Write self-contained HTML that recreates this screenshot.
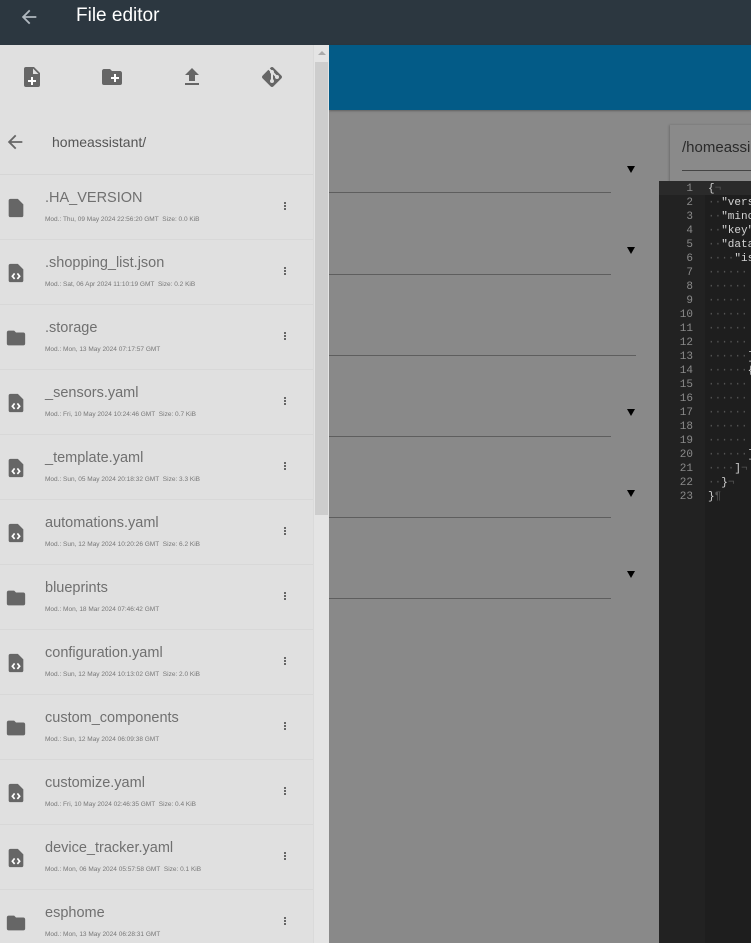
<!DOCTYPE html>
<html><head><meta charset="utf-8"><style>
*{margin:0;padding:0;box-sizing:border-box}
html,body{width:751px;height:943px;overflow:hidden}
body{background:#898989;font-family:"Liberation Sans",sans-serif;position:relative}
#wrap{position:absolute;left:0;top:0;width:751px;height:943px;overflow:hidden}
.top{position:absolute;left:0;top:0;width:751px;height:45px;background:#2c3740}
.top .t{position:absolute;left:76px;top:5px;color:#fff;font-size:19px}
.blue{position:absolute;left:329px;top:45px;right:0;height:65px;background:#035b87;box-shadow:0 1px 2px rgba(0,0,0,.3)}
.line{position:absolute;left:329px;height:1px;background:#5e5e5e}
.arr{position:absolute;left:627px;width:0;height:0;border-left:4px solid transparent;border-right:4px solid transparent;border-top:7px solid #000}
.card{position:absolute;left:670px;top:125px;width:90px;height:60px;background:#8a8a8a;box-shadow:-1px 0 2px rgba(0,0,0,.2)}
.card .p{position:absolute;left:12px;top:14px;font-size:15px;color:#2a2a2a}
.card .u{position:absolute;left:12px;top:45px;width:80px;height:1px;background:#444}
.ed{position:absolute;left:659px;top:181px;right:0;bottom:0;background:#1e1e1e}
.gut{position:absolute;left:0;top:0;width:46px;bottom:0;background:#222}
.ln{position:absolute;left:0;width:34px;text-align:right;font-family:"Liberation Mono",monospace;font-size:11px;color:#8a8a8a}
.code{position:absolute;left:49px;font-family:"Liberation Mono",monospace;font-size:11px;color:#d4d4d4;white-space:pre}
.curl{position:absolute;left:0;top:0;right:0;height:14px;background:#2a2a2a}
.drawer{position:absolute;left:0;top:45px;width:329px;height:898px;background:#e0e0e0;overflow:hidden}
.sb{position:absolute;left:313px;top:0;width:16px;height:898px;background:#e4e4e4;border-left:1px solid #dadada}
.thumb{position:absolute;left:1px;top:17px;width:13px;height:453px;background:#cdcdcd}
.item{position:absolute;left:0;width:313px;height:65px;border-bottom:1px solid #d8d8d8}
.item .n{position:absolute;left:45px;top:15px;font-size:14.5px;color:#707070}
.item .m{position:absolute;left:45px;top:41px;font-size:6.5px;color:#777}
.item svg.ic{position:absolute;left:5px;top:22px}
.dots{position:absolute;left:284px;top:27px;width:2px}
.dots i{display:block;width:2px;height:2px;background:#666;margin-bottom:1px}
</style></head><body><div id="wrap">
<div class="top">
<svg style="position:absolute;left:18px;top:6px" width="22" height="22" viewBox="0 0 24 24"><path d="M20,11V13H8L13.5,18.5L12.08,19.92L4.16,12L12.08,4.08L13.5,5.5L8,11H20Z" fill="#b0b8bf"/></svg>
<div class="t">File editor</div></div>
<div class="blue"></div>
<div class="line" style="top:192px;width:282px"></div>
<div class="line" style="top:274px;width:282px"></div>
<div class="line" style="top:355px;width:307px"></div>
<div class="line" style="top:436px;width:282px"></div>
<div class="line" style="top:517px;width:282px"></div>
<div class="line" style="top:598px;width:282px"></div>
<div class="arr" style="top:166px"></div><div class="arr" style="top:247px"></div><div class="arr" style="top:409px"></div><div class="arr" style="top:490px"></div><div class="arr" style="top:571px"></div>
<div class="card"><div class="p">/homeassi</div><div class="u"></div></div>
<div class="ed"><div class="gut"></div><div class="curl"></div>
<div class="ln" style="top:1px;line-height:14px">1<br>2<br>3<br>4<br>5<br>6<br>7<br>8<br>9<br>10<br>11<br>12<br>13<br>14<br>15<br>16<br>17<br>18<br>19<br>20<br>21<br>22<br>23</div>
<div class="code" style="top:1px;line-height:14px">{<span style="color:#555">¬</span>
<span style="color:#555">··</span>"vers
<span style="color:#555">··</span>"minc
<span style="color:#555">··</span>"key"
<span style="color:#555">··</span>"data
<span style="color:#555">····</span>"is
<span style="color:#555">······</span>
<span style="color:#555">······</span>
<span style="color:#555">······</span>
<span style="color:#555">······</span>
<span style="color:#555">······</span>
<span style="color:#555">······</span>
<span style="color:#555">······</span>]
<span style="color:#555">······</span>{
<span style="color:#555">······</span>
<span style="color:#555">······</span>
<span style="color:#555">······</span>
<span style="color:#555">······</span>
<span style="color:#555">······</span>
<span style="color:#555">······</span>]
<span style="color:#555">····</span>]<span style="color:#555">¬</span>
<span style="color:#555">··</span>}<span style="color:#555">¬</span>
}<span style="color:#555">¶</span></div></div>
<div class="drawer">
<svg style="position:absolute;left:20px;top:20px" width="24" height="24" viewBox="0 0 24 24"><path d="M14,2H6A2,2 0 0,0 4,4V20A2,2 0 0,0 6,22H18A2,2 0 0,0 20,20V8L14,2M13,9V3.5L18.5,9H13Z" fill="#666"/><path d="M11 12h2v3h3v2h-3v3h-2v-3h-3v-2h3z" fill="#fff"/></svg>
<svg style="position:absolute;left:100px;top:20px" width="24" height="24" viewBox="0 0 24 24"><path d="M10,4H4C2.89,4 2,4.89 2,6V18A2,2 0 0,0 4,20H20A2,2 0 0,0 22,18V8C22,6.89 21.1,6 20,6H12L10,4Z" fill="#666"/><path d="M14 9h2v3h3v2h-3v3h-2v-3h-3v-2h3z" fill="#fff"/></svg>
<svg style="position:absolute;left:180px;top:20px" width="24" height="24" viewBox="0 0 24 24"><path d="M9,16V10H5L12,3L19,10H15V16H9M5,20V18H19V20H5Z" fill="#666"/></svg>
<svg style="position:absolute;left:260px;top:20px" width="24" height="24" viewBox="0 0 24 24"><path d="M2.6,10.59L8.38,4.8L10.07,6.5C9.83,7.350 10.22,8.28 11,8.73V14.27C10.4,14.61 10,15.26 10,16A2,2 0 0,0 12,18A2,2 0 0,0 14,16C14,15.26 13.6,14.61 13,14.27V9.41L15.07,11.5C15,11.65 15,11.82 15,12A2,2 0 0,0 17,14A2,2 0 0,0 19,12A2,2 0 0,0 17,10C16.82,10 16.65,10 16.5,10.07L13.93,7.5C14.19,6.57 13.710,5.55 12.78,5.16C12.35,5 11.9,4.96 11.5,5.07L9.8,3.38L10.59,2.6C11.37,1.81 12.63,1.81 13.41,2.6L21.4,10.59C22.19,11.37 22.19,12.63 21.4,13.41L13.41,21.4C12.63,22.19 11.37,22.19 10.59,21.4L2.6,13.41C1.81,12.63 1.81,11.37 2.6,10.59Z" fill="#666"/></svg>
<svg style="position:absolute;left:4px;top:86px" width="22" height="22" viewBox="0 0 24 24"><path d="M20,11V13H8L13.5,18.5L12.08,19.92L4.16,12L12.08,4.08L13.5,5.5L8,11H20Z" fill="#666"/></svg>
<div style="position:absolute;left:52px;top:89px;font-size:14px;color:#555">homeassistant/</div>
<div style="position:absolute;left:0;top:129px;width:313px;height:1px;background:#d6d6d6"></div>
<div class="sb"><div class="thumb"></div><div style="position:absolute;left:4px;top:6px;border-left:4px solid transparent;border-right:4px solid transparent;border-bottom:4px solid #aaa"></div></div>
<div id="list" style="position:absolute;left:0;top:-45px;width:313px;height:943px;overflow:hidden"></div>
</div>
<script>
var F='<svg class="ic" width="22" height="22" viewBox="0 0 24 24"><path d="M14,2H6A2,2 0 0,0 4,4V20A2,2 0 0,0 6,22H18A2,2 0 0,0 20,20V8L14,2Z" fill="#666"/></svg>';
var C='<svg class="ic" width="22" height="22" viewBox="0 0 24 24"><path d="M14,2H6A2,2 0 0,0 4,4V20A2,2 0 0,0 6,22H18A2,2 0 0,0 20,20V8L14,2Z" fill="#666"/><path d="M10.5 12.5L8 15.5L10.5 18.5M13.5 12.5L16 15.5L13.5 18.5" stroke="#fff" stroke-width="1.8" fill="none"/></svg>';
var D='<svg class="ic" width="22" height="22" viewBox="0 0 24 24"><path d="M10,4H4C2.89,4 2,4.89 2,6V18A2,2 0 0,0 4,20H20A2,2 0 0,0 22,18V8C22,6.89 21.1,6 20,6H12L10,4Z" fill="#666"/></svg>';
var it=[[F,'.HA_VERSION','Thu, 09 May 2024 22:56:20 GMT','0.0'],[C,'.shopping_list.json','Sat, 06 Apr 2024 11:10:19 GMT','0.2'],[D,'.storage','Mon, 13 May 2024 07:17:57 GMT'],[C,'_sensors.yaml','Fri, 10 May 2024 10:24:46 GMT','0.7'],[C,'_template.yaml','Sun, 05 May 2024 20:18:32 GMT','3.3'],[C,'automations.yaml','Sun, 12 May 2024 10:20:26 GMT','6.2'],[D,'blueprints','Mon, 18 Mar 2024 07:46:42 GMT'],[C,'configuration.yaml','Sun, 12 May 2024 10:13:02 GMT','2.0'],[D,'custom_components','Sun, 12 May 2024 06:09:38 GMT'],[C,'customize.yaml','Fri, 10 May 2024 02:46:35 GMT','0.4'],[C,'device_tracker.yaml','Mon, 06 May 2024 05:57:58 GMT','0.1'],[D,'esphome','Mon, 13 May 2024 06:28:31 GMT']];
var h='';it.forEach(function(a,i){h+='<div class="item" style="top:'+(175+65*i)+'px">'+a[0]+'<div class="n">'+a[1]+'</div><div class="m">Mod.: '+a[2]+(a[3]?'&nbsp; Size: '+a[3]+' KiB':'')+'</div><div class="dots"><i></i><i></i><i></i></div></div>';});
document.getElementById('list').innerHTML=h;
</script>
</div></body></html>
